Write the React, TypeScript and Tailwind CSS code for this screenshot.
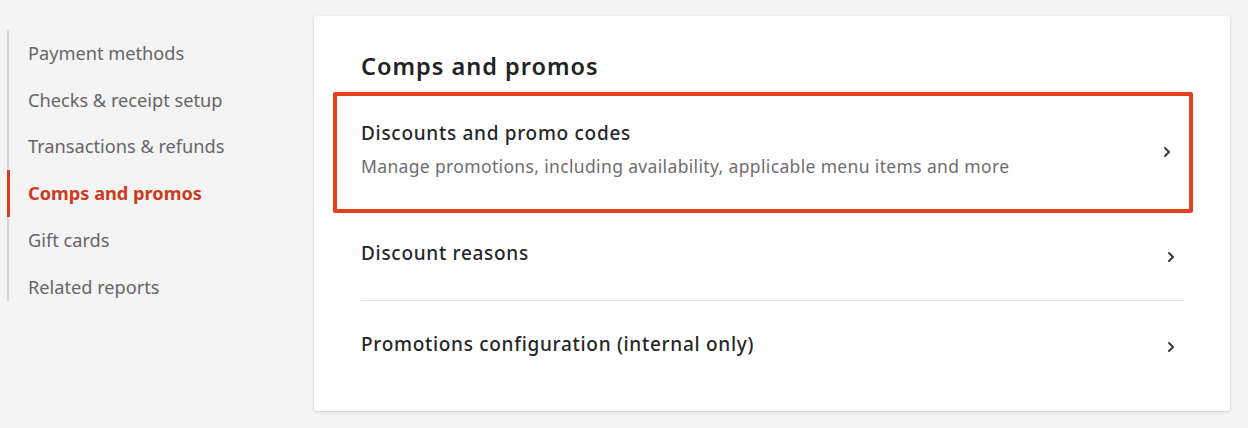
import React from 'react';

const navItems = [
    'Payment methods',
    'Checks & receipt setup',
    'Transactions & refunds',
    'Comps and promos',
    'Gift cards',
    'Related reports',
];

const Chevron = ({ className = '' }: { className?: string }) => (
    <svg width="8" height="12" viewBox="0 0 8 12" className={`shrink-0 text-[#3a3a3a] ${className}`}>
        <path d="M2 2l4 4-4 4" fill="none" stroke="currentColor" strokeWidth="2" strokeLinecap="round" strokeLinejoin="round" />
    </svg>
);

const Sidebar = ({ active }: { active: string }) => (
    <nav className="w-[314px] shrink-0 pl-[7px] pt-[30px] font-['Noto_Sans',sans-serif]">
        <ul className="h-[271px] border-l-2 border-[#d4d4d4]">
            {navItems.map(item => {
                const isActive = item === active;
                return (
                    <li
                        key={item}
                        className={`flex h-[46.8px] items-center text-[18.2px] ${
                            isActive
                                ? '-ml-[2px] border-l-[3px] border-[#d8401f] pl-[18px] font-bold text-[#cc3a1f]'
                                : 'pl-[19px] text-[#666666]'
                        }`}
                    >
                        {item}
                    </li>
                );
            })}
        </ul>
    </nav>
);

export default function App() {
    return (
        <div className="flex h-[428px] w-[1248px] bg-[#f4f4f4] font-['Noto_Sans',sans-serif]">
            <Sidebar active="Comps and promos" />

            <main className="mt-[16px] h-[395px] w-[916px] rounded-[3px] bg-white pl-[47px] pr-[46px] pt-[34px] shadow-[0_1px_3px_rgba(0,0,0,0.18)]">
                <h1 className="text-[23.5px] font-semibold leading-[32px] tracking-[1px] text-[#222222]">Comps and promos</h1>

                <div className="-ml-[28px] -mr-[9px] mt-[10px] flex h-[121px] items-center rounded-[2px] border-4 border-[#e8401c] pb-[6px] pl-[24px] pr-[18px]">
                    <div className="flex-1">
                        <div className="text-[19px] font-medium leading-[24px] tracking-[0.7px] text-[#262626]">Discounts and promo codes</div>
                        <div className="mt-[9px] text-[17.5px] leading-[24px] tracking-[0.35px] text-[#6e6e6e]">
                            Manage promotions, including availability, applicable menu items and more
                        </div>
                    </div>
                    <Chevron className="mt-[4px]" />
                </div>

                <div className="flex h-[88px] items-center border-b border-[#e2e2e2] pb-[4px] pr-[9px]">
                    <div className="mb-[4px] flex-1 text-[19px] font-medium leading-[24px] tracking-[0.7px] text-[#262626]">Discount reasons</div>
                    <Chevron className="mt-[4px]" />
                </div>

                <div className="flex h-[92px] items-center pr-[9px]">
                    <div className="mb-[6px] flex-1 text-[19px] font-medium leading-[24px] tracking-[0.7px] text-[#262626]">
                        Promotions configuration (internal only)
                    </div>
                    <Chevron />
                </div>
            </main>
        </div>
    );
}
